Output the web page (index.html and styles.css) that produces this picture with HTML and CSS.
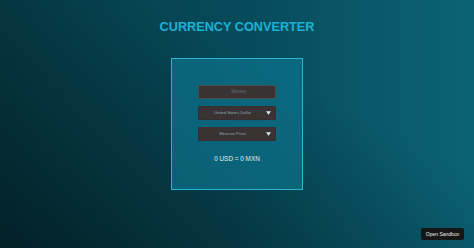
FILE: index.html
```html
<!DOCTYPE html>
<html lang="en">
<head>
<meta charset="utf-8">
<title>Currency Converter</title>
<link rel="stylesheet" href="styles.css">
</head>
<body>
<main class="page">
  <h1 class="title">CURRENCY CONVERTER</h1>
  <section class="card">
    <input class="field money" type="text" placeholder="Money">
    <div class="field picker">
      <select class="picker-select">
        <option>United States Dollar</option>
      </select>
      <svg class="arrow" viewBox="0 0 6 4" width="5" height="4"><polygon points="0,0 6,0 3,4" fill="#d4ecf2"/></svg>
    </div>
    <div class="field picker">
      <select class="picker-select">
        <option>Mexican Peso</option>
      </select>
      <svg class="arrow" viewBox="0 0 6 4" width="5" height="4"><polygon points="0,0 6,0 3,4" fill="#d4ecf2"/></svg>
    </div>
    <p class="result">0 USD = 0 MXN</p>
  </section>
</main>
<button class="sandbox">Open Sandbox</button>
</body>
</html>
```
FILE: styles.css
```css
html, body {
  margin: 0;
  height: 100%;
}
body {
  width: 474px;
  height: 248px;
  overflow: hidden;
  font-family: "Liberation Sans", Arial, sans-serif;
  background:
    linear-gradient(to top right, rgba(0, 0, 0, 0.45) 0%, rgba(0, 0, 0, 0) 65%),
    linear-gradient(to right, #053c48 0%, #074a59 50%, #0b6276 100%);
  position: relative;
}
.page {
  display: flex;
  flex-direction: column;
  align-items: center;
  padding-top: 21px;
}
.title {
  margin: 0;
  font-size: 12.7px;
  line-height: 1;
  font-weight: 700;
  color: #1cb2d4;
  letter-spacing: 0;
}
.card {
  margin-top: 24px;
  width: 130px;
  height: 130px;
  border: 1px solid #2ab4cf;
  background: rgba(12, 112, 136, 0.75);
  box-sizing: content-box;
  display: flex;
  flex-direction: column;
  align-items: center;
}
.field {
  box-sizing: border-box;
  width: 78px;
  height: 14px;
  background: #3a3233;
  border: 1px solid #3f3a3b;
  border-radius: 1px;
  margin: 0;
}
.money {
  margin-top: 26px;
  padding: 0 0 0 3px;
  font-family: "Liberation Sans", Arial, sans-serif;
  font-size: 4.9px;
  text-align: center;
  color: #a0b4b8;
  border-color: #4a4e50;
  outline: none;
}
.money::placeholder {
  color: #5d7479;
}
.picker {
  margin-top: 7px;
  display: flex;
  align-items: center;
  border-color: #362f30;
}
.picker-select {
  flex: 1;
  min-width: 0;
  height: 100%;
  appearance: none;
  -webkit-appearance: none;
  background: transparent;
  border: 0;
  margin: 0;
  padding: 0;
  font-family: "Liberation Sans", Arial, sans-serif;
  font-size: 4.2px;
  color: #8aaab2;
  text-align: center;
  text-align-last: center;
  outline: none;
}
.arrow {
  flex: none;
  margin: 0 4px 0 0;
  display: block;
}
.result {
  margin: 15px 0 0;
  font-size: 6.4px;
  line-height: 1;
  color: #e2f0f3;
}
.sandbox {
  position: absolute;
  right: 10px;
  bottom: 8px;
  width: 43px;
  height: 12px;
  padding: 0;
  border: 0;
  border-radius: 2px;
  background: #161616;
  color: #f0f0f0;
  font-family: "Liberation Sans", Arial, sans-serif;
  font-size: 5px;
  line-height: 12px;
  text-align: center;
}
```
